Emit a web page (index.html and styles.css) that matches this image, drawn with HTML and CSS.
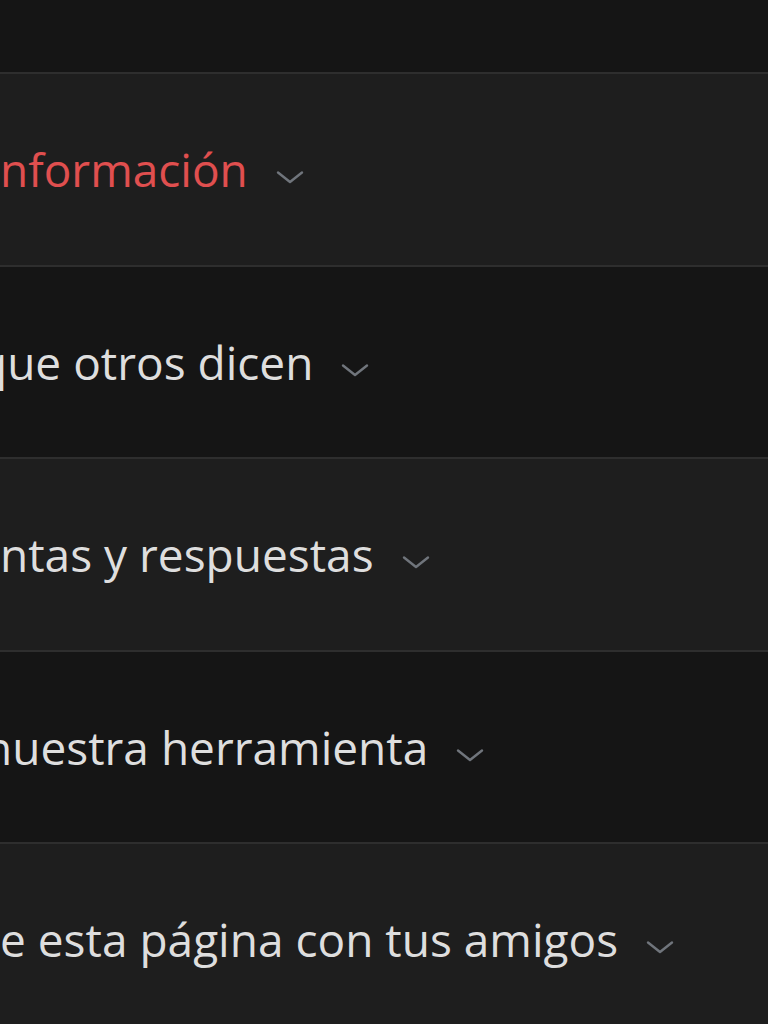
FILE: index.html
```html
<!DOCTYPE html>
<html lang="es">
<head>
  <meta charset="UTF-8" />
  <meta name="viewport" content="width=device-width, initial-scale=1.0" />
  <title>Preguntas frecuentes</title>
  <link rel="stylesheet" href="styles.css">
</head>
<body>
  <div class="top-band"></div>
  <div class="faq">
    <div class="faq-item active">
      <div class="faq-head">
        <span class="faq-title"><span class="lead">Más i</span>nformación</span>
        <svg class="chevron" viewBox="0 0 28 14"><path d="M2 2.5 L14 12 L26 2.5" /></svg>
      </div>
    </div>
    <div class="faq-item">
      <div class="faq-head">
        <span class="faq-title"><span class="lead">Lo </span>que otros dicen</span>
        <svg class="chevron" viewBox="0 0 28 14"><path d="M2 2.5 L14 12 L26 2.5" /></svg>
      </div>
    </div>
    <div class="faq-item">
      <div class="faq-head">
        <span class="faq-title"><span class="lead">Pregu</span>ntas y respuestas</span>
        <svg class="chevron" viewBox="0 0 28 14"><path d="M2 2.5 L14 12 L26 2.5" /></svg>
      </div>
    </div>
    <div class="faq-item">
      <div class="faq-head">
        <span class="faq-title"><span class="lead">Acerca de </span>nuestra herramienta</span>
        <svg class="chevron" viewBox="0 0 28 14"><path d="M2 2.5 L14 12 L26 2.5" /></svg>
      </div>
    </div>
    <div class="faq-item">
      <div class="faq-head">
        <span class="faq-title"><span class="lead">Compart</span>e esta página con tus amigos</span>
        <svg class="chevron" viewBox="0 0 28 14"><path d="M2 2.5 L14 12 L26 2.5" /></svg>
      </div>
    </div>
  </div>
</body>
</html>
```

FILE: styles.css
```css
body {
  margin: 0;
  background: #151515;
  font-family: 'Open Sans', 'Noto Sans', sans-serif;
  overflow: hidden;
}
.top-band {
  height: 72px;
}
.faq-item {
  border-top: 2px solid #2e2e2e;
  background: #151515;
}
.faq-item:nth-child(odd) {
  background: #1e1e1e;
}
.faq-head {
  height: 190.5px;
  display: flex;
  align-items: center;
  cursor: pointer;
}
.faq-title {
  font-size: 46px;
  color: #dedede;
  white-space: nowrap;
  margin-right: 28px;
}
.faq-item.active .faq-title {
  color: #e04f4f;
}
.faq-item:nth-child(2) .faq-title {
  margin-left: -21px;
}
.faq-item:nth-child(4) .faq-title {
  margin-left: -16px;
}
/* the start of each title runs off the left edge */
.lead {
  display: inline-block;
  width: 0;
  direction: rtl;
  white-space: nowrap;
}
.chevron {
  width: 28px;
  height: 14px;
  margin-top: 16px;
  fill: none;
  stroke: #70757c;
  stroke-width: 2.4;
  stroke-linecap: round;
  stroke-linejoin: round;
}
```
